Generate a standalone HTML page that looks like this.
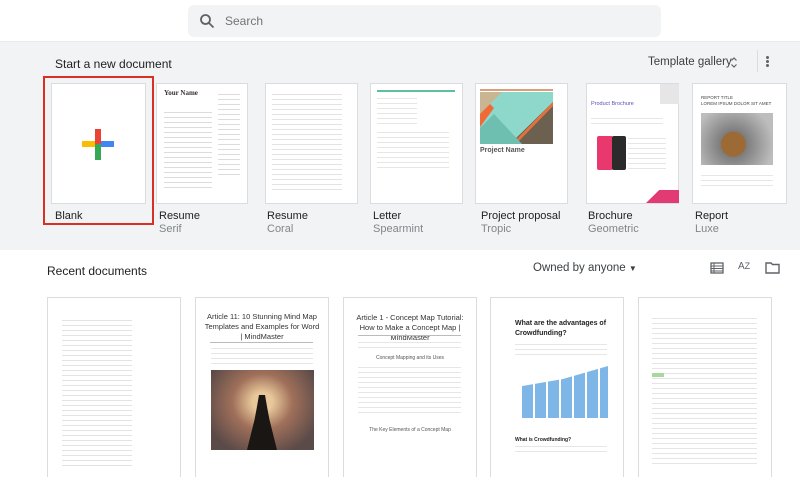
<!DOCTYPE html>
<html><head><meta charset="utf-8"><style>
*{margin:0;padding:0;box-sizing:border-box}
body{width:800px;height:476px;overflow:hidden;background:#fff;font-family:"Liberation Sans",Arial,sans-serif;position:relative;color:#202124}
.abs{position:absolute}
.top{left:0;top:0;width:800px;height:42px;background:#fff;border-bottom:1px solid #e8eaed}
.search{left:188px;top:5px;width:473px;height:32px;background:#f1f3f4;border-radius:6px}
.gray{left:0;top:42px;width:800px;height:208px;background:#f1f3f4}
.card{background:#fff;border:1px solid #dadce0}
.lbl{font-size:11px;color:#202124}
.sub{font-size:11px;color:#80868b}
.lines{background:repeating-linear-gradient(#fff 0 2px,#dcdcdc 2px 3px,#fff 3px 5px)}
.doc{background:#fff;border:1px solid #dadce0;border-bottom:none}
</style></head><body>
<div class="abs top"></div>
<div class="abs search"></div>
<svg class="abs" style="left:199px;top:13px" width="16" height="16" viewBox="0 0 16 16"><circle cx="6.5" cy="6.5" r="4.5" fill="none" stroke="#5f6368" stroke-width="1.8"/><path d="M10 10l4.5 4.5" stroke="#5f6368" stroke-width="1.8"/></svg>
<div class="abs" style="left:225px;top:14px;font-size:12px;color:#70757a">Search</div>
<div class="abs gray"></div>
<div class="abs" style="left:55px;top:57px;font-size:12px;color:#202124">Start a new document</div>
<div class="abs" style="left:648px;top:56px;font-size:11.5px;color:#3c4043">Template gallery</div>
<svg class="abs" style="left:730px;top:56px" width="8" height="13" viewBox="0 0 8 13"><path d="M1.5 4.5L4 2l2.5 2.5M1.5 8.5L4 11l2.5-2.5" fill="none" stroke="#5f6368" stroke-width="1.2"/></svg>
<div class="abs" style="left:757px;top:50px;width:1px;height:22px;background:#dadce0"></div>
<div class="abs" style="left:766px;top:56px;width:3px;height:3px;background:#5f6368;border-radius:50%;box-shadow:0 4px 0 #5f6368,0 8px 0 #5f6368"></div>

<div class="abs" style="left:43px;top:76px;width:111px;height:149px;border:2px solid #d93025"></div>
<div class="abs card" style="left:51px;top:83px;width:95px;height:121px"></div>
<div class="abs" style="left:82px;top:141px;width:16px;height:6px;background:#fbbc04"></div>
<div class="abs" style="left:98px;top:141px;width:16px;height:6px;background:#4285f4"></div>
<div class="abs" style="left:95px;top:129px;width:6px;height:15px;background:#ea4335"></div>
<div class="abs" style="left:95px;top:144px;width:6px;height:16px;background:#34a853"></div>
<div class="abs lbl" style="left:55px;top:210px">Blank</div>

<div class="abs card" style="left:156px;top:83px;width:92px;height:121px"></div>
<div class="abs" style="left:164px;top:89px;font-family:'Liberation Serif',serif;font-weight:bold;font-size:7px;color:#333">Your Name</div>
<div class="abs lines" style="left:164px;top:110px;width:48px;height:78px"></div>
<div class="abs lines" style="left:218px;top:92px;width:22px;height:85px"></div>
<div class="abs card" style="left:265px;top:83px;width:93px;height:121px"></div>
<div class="abs lines" style="left:272px;top:92px;width:70px;height:100px;opacity:.8"></div>
<div class="abs card" style="left:370px;top:83px;width:93px;height:121px"></div>
<div class="abs" style="left:377px;top:90px;width:78px;height:1.5px;background:#5fbf9d"></div>
<div class="abs lines" style="left:377px;top:96px;width:40px;height:30px;opacity:.7"></div>
<div class="abs lines" style="left:377px;top:130px;width:72px;height:40px;opacity:.7"></div>
<div class="abs card" style="left:475px;top:83px;width:93px;height:121px"></div>
<svg class="abs" style="left:480px;top:92px" width="73" height="52" viewBox="0 0 73 52"><rect width="73" height="52" fill="#6c6051"/><path d="M0 0h73v10L30 52H0z" fill="#8ed7cb"/><path d="M0 0h22L0 22z" fill="#c9b591"/><path d="M0 22l10-10 4 4L0 35z" fill="#f06a35"/><path d="M73 14L36 52h-4l41-42z" fill="#e6713a"/><path d="M0 36l14-14 28 30H0z" fill="#6fbfb0"/></svg>
<div class="abs" style="left:480px;top:89px;width:73px;height:2px;background:#d8a07a"></div>
<div class="abs" style="left:480px;top:147px;font-size:7px;color:#555;font-weight:bold">Project Name</div>
<div class="abs card" style="left:586px;top:83px;width:93px;height:121px"></div>
<div class="abs" style="left:591px;top:101px;font-size:5.5px;color:#5b4fbf">Product Brochure</div>
<div class="abs lines" style="left:591px;top:116px;width:72px;height:12px;opacity:.7"></div>
<div class="abs" style="left:597px;top:136px;width:16px;height:34px;background:#e8386d;border-radius:2px"></div>
<div class="abs" style="left:612px;top:136px;width:14px;height:34px;background:#2b2b2b;border-radius:2px"></div>
<div class="abs lines" style="left:628px;top:136px;width:38px;height:34px;opacity:.7"></div>
<div class="abs" style="left:646px;top:190px;width:33px;height:13px;background:#e23a73;clip-path:polygon(40% 0,100% 0,100% 100%,0 100%)"></div>
<div class="abs" style="left:660px;top:84px;width:19px;height:20px;background:#e6e6e6"></div>
<div class="abs card" style="left:692px;top:83px;width:95px;height:121px"></div>
<div class="abs" style="left:701px;top:95px;font-size:4.5px;color:#444;line-height:6px">REPORT TITLE<br>LOREM IPSUM DOLOR SIT AMET</div>
<div class="abs" style="left:701px;top:113px;width:72px;height:52px;background:radial-gradient(circle at 45% 60%,#9b6a35 0 12px,#7d7d7d 13px,#bdbdbd 40px)"></div>
<div class="abs lines" style="left:701px;top:173px;width:72px;height:16px;opacity:.7"></div>

<div class="abs lbl" style="left:159px;top:210px">Resume</div><div class="abs sub" style="left:159px;top:223px">Serif</div>
<div class="abs lbl" style="left:267px;top:210px">Resume</div><div class="abs sub" style="left:267px;top:223px">Coral</div>
<div class="abs lbl" style="left:373px;top:210px">Letter</div><div class="abs sub" style="left:373px;top:223px">Spearmint</div>
<div class="abs lbl" style="left:481px;top:210px">Project proposal</div><div class="abs sub" style="left:481px;top:223px">Tropic</div>
<div class="abs lbl" style="left:588px;top:210px">Brochure</div><div class="abs sub" style="left:588px;top:223px">Geometric</div>
<div class="abs lbl" style="left:695px;top:210px">Report</div><div class="abs sub" style="left:695px;top:223px">Luxe</div>

<div class="abs" style="left:47px;top:264px;font-size:12px;color:#202124">Recent documents</div>
<div class="abs" style="left:533px;top:262px;font-size:11.5px;color:#3c4043">Owned by anyone <span style="font-size:8px">▼</span></div>
<svg class="abs" style="left:710px;top:262px" width="14" height="12" viewBox="0 0 14 12"><rect x="1" y="1" width="12" height="10" fill="none" stroke="#5f6368" stroke-width="1.3"/><path d="M1 4h12M1 6.5h12M1 9h12M4 1v10" stroke="#5f6368" stroke-width="1"/></svg>
<div class="abs" style="left:738px;top:261px;font-size:10px;color:#5f6368">A<span style="font-size:9px">Z</span></div>
<svg class="abs" style="left:765px;top:262px" width="15" height="12" viewBox="0 0 15 12"><path d="M1 1h5l1.5 1.5H14V11H1z" fill="none" stroke="#5f6368" stroke-width="1.4"/></svg>

<div class="abs doc" style="left:47px;top:297px;width:134px;height:180px"></div>
<div class="abs lines" style="left:62px;top:318px;width:70px;height:150px;opacity:.8"></div>
<div class="abs doc" style="left:195px;top:297px;width:134px;height:180px"></div>
<div class="abs" style="left:204px;top:312px;width:116px;text-align:center;font-size:7.5px;line-height:10px;color:#333">Article 11: 10 Stunning Mind Map Templates and Examples for Word | MindMaster</div>
<div class="abs" style="left:210px;top:342px;width:103px;height:1px;background:#bbb"></div>
<div class="abs lines" style="left:211px;top:346px;width:102px;height:20px;opacity:.7"></div>
<div class="abs" style="left:211px;top:370px;width:103px;height:80px;background:radial-gradient(ellipse at 50% 40%,#e8c79a 0 10px,#a0705a 30px,#5a4a48 60px)"></div>
<div class="abs" style="left:247px;top:395px;width:30px;height:55px;background:#1a1614;clip-path:polygon(40% 0,60% 0,68% 25%,75% 45%,100% 100%,0 100%,25% 45%,32% 25%)"></div>
<div class="abs doc" style="left:343px;top:297px;width:134px;height:180px"></div>
<div class="abs" style="left:350px;top:313px;width:120px;text-align:center;font-size:7.5px;line-height:10px;color:#333">Article 1 - Concept Map Tutorial: How to Make a Concept Map | MindMaster</div>
<div class="abs" style="left:358px;top:335px;width:103px;height:1px;background:#bbb"></div>
<div class="abs lines" style="left:358px;top:340px;width:103px;height:10px;opacity:.7"></div>
<div class="abs" style="left:352px;top:355px;width:116px;text-align:center;font-size:5px;color:#555">Concept Mapping and its Uses</div>
<div class="abs lines" style="left:358px;top:365px;width:103px;height:50px;opacity:.7"></div>
<div class="abs" style="left:352px;top:427px;width:116px;text-align:center;font-size:5px;color:#555">The Key Elements of a Concept Map</div>
<div class="abs doc" style="left:490px;top:297px;width:134px;height:180px"></div>
<div class="abs" style="left:515px;top:319px;font-size:7px;font-weight:bold;line-height:10px;color:#222">What are the advantages of<br>Crowdfunding?</div>
<div class="abs lines" style="left:515px;top:342px;width:92px;height:14px;opacity:.7"></div>
<div class="abs" style="left:518px;top:366px;width:90px;height:52px;background:linear-gradient(to right,transparent 0 4px,#7fb6e8 4px 15px,transparent 15px 17px,#7fb6e8 17px 28px,transparent 28px 30px,#7fb6e8 30px 41px,transparent 41px 43px,#7fb6e8 43px 54px,transparent 54px 56px,#7fb6e8 56px 67px,transparent 67px 69px,#7fb6e8 69px 80px,transparent 80px 82px,#7fb6e8 82px 90px);clip-path:polygon(0 40%,50% 25%,100% 0,100% 100%,0 100%)"></div>
<div class="abs" style="left:515px;top:437px;font-size:5px;font-weight:bold;color:#222">What is Crowdfunding?</div>
<div class="abs lines" style="left:515px;top:444px;width:92px;height:12px;opacity:.7"></div>
<div class="abs doc" style="left:638px;top:297px;width:134px;height:180px"></div>
<div class="abs lines" style="left:652px;top:316px;width:105px;height:150px;opacity:.75"></div>
<div class="abs" style="left:652px;top:373px;width:12px;height:4px;background:#a8d8a0"></div>
</body></html>
